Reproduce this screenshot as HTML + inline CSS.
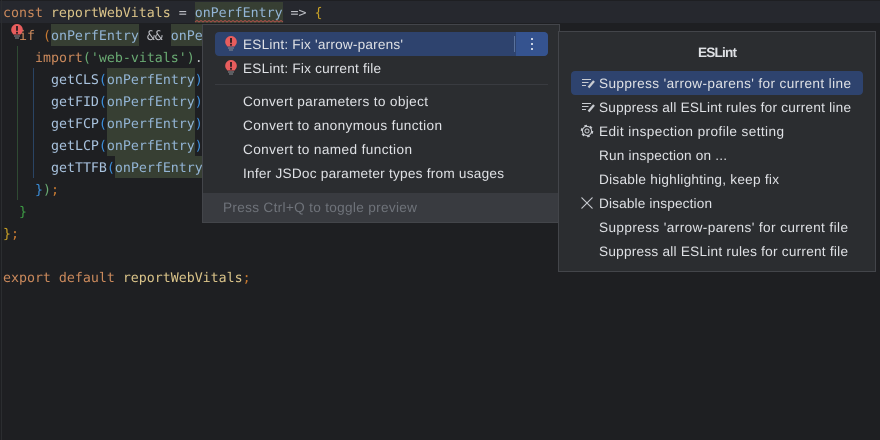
<!DOCTYPE html>
<html>
<head>
<meta charset="utf-8">
<style>
html,body{margin:0;padding:0;background:#1e1f22;width:880px;height:440px;overflow:hidden}
svg{display:block;text-rendering:geometricPrecision}
.c{font-family:"DejaVu Sans Mono","Liberation Mono",monospace;font-size:13.28px;white-space:pre}
.u{font-family:"Liberation Sans",sans-serif;font-size:13.6px;fill:#dfe1e5}
.k{fill:#cc8a5c}.f{fill:#dcc58a}.p{fill:#bcbec4}.v{fill:#93b5d6}.g{fill:#a9c3df}
.o{fill:#c77a32}.b{fill:#3b8fdc}.s{fill:#6aab73}.gr{fill:#3d9e45}.y{fill:#c9a227}
</style>
</head>
<body>
<svg width="880" height="440" viewBox="0 0 880 440" xmlns="http://www.w3.org/2000/svg">
<defs>
<g id="bulb">
<path d="M0-7a5.800 5.800 0 0 1 5.800 5.800c0 2.200-1.200 3.300-2.100 4.700H-3.700C-4.600 2.100-5.800 1-5.800-1.200A5.800 5.800 0 0 1 0-7z" fill="#e85d5d"/>
<rect x="-1" y="-5" width="2" height="4.800" fill="#3a2226"/>
<rect x="-1" y="0.800" width="2" height="1.900" fill="#3a2226"/>
<rect x="-3" y="4.500" width="6" height="1" fill="#8d8f94"/>
<rect x="-2" y="6.500" width="4" height="1" fill="#8d8f94"/>
</g>
<g id="sup" fill="none" stroke="#c9ccd1">
<path d="M0 1.500H9M0 4.500H6.500M0 7.500H4" stroke-width="1.100"/>
<path d="M6.500 9.500L12 3" stroke-width="2.300"/>
</g>
</defs>

<rect width="880" height="440" fill="#1e1f22"/>
<rect x="0" y="1" width="880" height="22" fill="#26282e"/>
<rect x="1" y="0" width="1" height="440" fill="#2b2d30"/>

<rect x="195" y="2" width="88" height="21" fill="#373f33"/>
<path d="M195 22l2-1.500 2 1.500 2-1.500 2 1.500 2-1.500 2 1.500 2-1.500 2 1.500 2-1.500 2 1.500 2-1.500 2 1.500 2-1.500 2 1.500 2-1.500 2 1.500 2-1.500 2 1.500 2-1.500 2 1.500 2-1.500 2 1.500 2-1.500 2 1.500 2-1.500 2 1.500 2-1.500 2 1.500 2-1.500 2 1.500 2-1.500 2 1.500 2-1.500 2 1.500 2-1.500 2 1.500 2-1.500 2 1.500 2-1.500 2 1.500 2-1.500 2 1.500 2-1.500 2 1.500" fill="none" stroke="#a8504a" stroke-width="1"/>
<rect x="51" y="24" width="88" height="22" fill="#373f33"/>
<rect x="171" y="24" width="40" height="22" fill="#373f33"/>
<rect x="107" y="68" width="88" height="88" fill="#373f33"/>
<rect x="115" y="156" width="95" height="22" fill="#373f33"/>
<rect x="17" y="46" width="1" height="154" fill="#2f4a33"/>
<rect x="33" y="68" width="1" height="110" fill="#2a4464"/>

<g class="c">
<text x="3" y="17"><tspan class="k">const </tspan><tspan class="f">reportWebVitals</tspan><tspan class="p"> = </tspan><tspan class="v">onPerfEntry</tspan><tspan class="p"> =&gt; </tspan><tspan class="y">{</tspan></text>
<text x="19" y="40"><tspan class="k">if </tspan><tspan class="o">(</tspan><tspan class="v">onPerfEntry</tspan><tspan class="p"> &amp;&amp; </tspan><tspan class="v">onPerfEntry</tspan></text>
<text x="35" y="62"><tspan class="k">import</tspan><tspan class="s">('web-vitals')</tspan><tspan class="p">.</tspan></text>
<text x="51" y="84"><tspan class="g">getCLS</tspan><tspan class="b">(</tspan><tspan class="v">onPerfEntry</tspan><tspan class="b">)</tspan></text>
<text x="51" y="106"><tspan class="g">getFID</tspan><tspan class="b">(</tspan><tspan class="v">onPerfEntry</tspan><tspan class="b">)</tspan></text>
<text x="51" y="128"><tspan class="g">getFCP</tspan><tspan class="b">(</tspan><tspan class="v">onPerfEntry</tspan><tspan class="b">)</tspan></text>
<text x="51" y="150"><tspan class="g">getLCP</tspan><tspan class="b">(</tspan><tspan class="v">onPerfEntry</tspan><tspan class="b">)</tspan></text>
<text x="51" y="172"><tspan class="g">getTTFB</tspan><tspan class="b">(</tspan><tspan class="v">onPerfEntry</tspan></text>
<text x="35" y="194"><tspan class="b">}</tspan><tspan class="s">)</tspan><tspan class="o">;</tspan></text>
<text x="19" y="216"><tspan class="gr">}</tspan></text>
<text x="3" y="238"><tspan class="y">}</tspan><tspan class="o">;</tspan></text>
<text x="3" y="282"><tspan class="k">export default </tspan><tspan class="f">reportWebVitals</tspan><tspan class="o">;</tspan></text>
</g>

<use href="#bulb" x="17" y="31"/>

<!-- left popup -->
<rect x="202.500" y="24.500" width="357" height="198" fill="#2b2d30" stroke="#43454a"/>
<rect x="203" y="193" width="356" height="29" fill="#393b40"/>
<rect x="215" y="32" width="333" height="24" rx="4" fill="#2e436e"/>
<path d="M516 32h28a4 4 0 0 1 4 4v16a4 4 0 0 1-4 4h-28z" fill="#35538f"/>
<rect x="514" y="36" width="1" height="16" fill="#5a729c"/>
<rect x="531" y="38" width="2" height="2" fill="#c9d2e3"/>
<rect x="531" y="43" width="2" height="2" fill="#c9d2e3"/>
<rect x="531" y="48" width="2" height="2" fill="#c9d2e3"/>
<rect x="215" y="84" width="333" height="1" fill="#393b40"/>
<use href="#bulb" x="231" y="43"/>
<use href="#bulb" x="231" y="67"/>
<g class="u">
<text x="243" y="49" textLength="160" lengthAdjust="spacing">ESLint: Fix 'arrow-parens'</text>
<text x="243" y="73" textLength="138" lengthAdjust="spacing">ESLint: Fix current file</text>
<text x="243" y="106" textLength="185" lengthAdjust="spacing">Convert parameters to object</text>
<text x="243" y="130" textLength="199" lengthAdjust="spacing">Convert to anonymous function</text>
<text x="243" y="154" textLength="169" lengthAdjust="spacing">Convert to named function</text>
<text x="243" y="178" textLength="261" lengthAdjust="spacing">Infer JSDoc parameter types from usages</text>
<text x="223" y="212" textLength="194" lengthAdjust="spacing" style="fill:#6f737a">Press Ctrl+Q to toggle preview</text>
</g>

<!-- right popup -->
<rect x="558.500" y="31.500" width="317" height="240" fill="#2b2d30" stroke="#43454a"/>
<rect x="571" y="71" width="292" height="24" rx="4" fill="#2e436e"/>
<use href="#sup" x="582" y="78"/>
<use href="#sup" x="582" y="102"/>
<g fill="none" stroke="#c9ccd1">
<circle cx="587" cy="131" r="5.500" stroke-width="1.500" stroke-dasharray="2.700 3.060"/>
<circle cx="587" cy="131" r="4.600" stroke-width="1"/>
<circle cx="587" cy="131" r="2" stroke-width="1"/>
</g>
<path d="M581.500 197.500l11 11M592.500 197.500l-11 11" fill="none" stroke="#c9ccd1" stroke-width="1.100"/>
<g class="u">
<text x="698" y="57" textLength="39" lengthAdjust="spacing" font-weight="700">ESLint</text>
<text x="599" y="88" textLength="252" lengthAdjust="spacing">Suppress 'arrow-parens' for current line</text>
<text x="599" y="112" textLength="252" lengthAdjust="spacing">Suppress all ESLint rules for current line</text>
<text x="599" y="136" textLength="185" lengthAdjust="spacing">Edit inspection profile setting</text>
<text x="599" y="160" textLength="128" lengthAdjust="spacing">Run inspection on ...</text>
<text x="599" y="184" textLength="180" lengthAdjust="spacing">Disable highlighting, keep fix</text>
<text x="599" y="208" textLength="113" lengthAdjust="spacing">Disable inspection</text>
<text x="599" y="232" textLength="249" lengthAdjust="spacing">Suppress 'arrow-parens' for current file</text>
<text x="599" y="256" textLength="249" lengthAdjust="spacing">Suppress all ESLint rules for current file</text>
</g>
</svg>
</body>
</html>
